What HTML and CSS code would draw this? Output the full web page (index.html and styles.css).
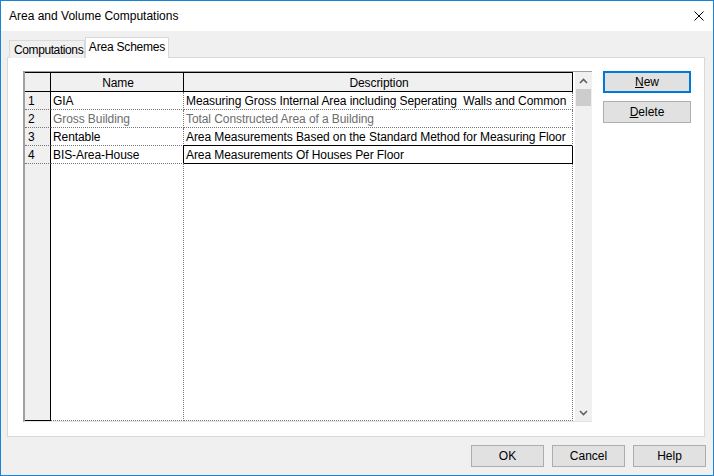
FILE: index.html
```html
<!DOCTYPE html>
<html>
<head>
<meta charset="utf-8">
<link rel="stylesheet" href="styles.css">
</head>
<body>
<div class="window">
  <div class="titlebar">
    <span class="title">Area and Volume Computations</span>
    <svg class="close" width="10" height="10" viewBox="0 0 10 10"><path d="M0.5 0.5 L9.5 9.5 M9.5 0.5 L0.5 9.5" stroke="#000" stroke-width="1" fill="none"/></svg>
  </div>
  <div class="client">
    <div class="tabs">
      <div class="tab">Computations</div>
      <div class="tab active">Area Schemes</div>
    </div>
    <div class="panel">
      <div class="gridbox">
        <div class="grid">
          <div class="row head">
            <div class="c rh"></div>
            <div class="c name">Name</div>
            <div class="c desc">Description</div>
          </div>
          <div class="row">
            <div class="c rh">1</div>
            <div class="c name">GIA</div>
            <div class="c desc">Measuring Gross Internal Area including Seperating&nbsp; Walls and Common</div>
          </div>
          <div class="row dim">
            <div class="c rh">2</div>
            <div class="c name">Gross Building</div>
            <div class="c desc">Total Constructed Area of a Building</div>
          </div>
          <div class="row">
            <div class="c rh">3</div>
            <div class="c name">Rentable</div>
            <div class="c desc">Area Measurements Based on the Standard Method for Measuring Floor</div>
          </div>
          <div class="row">
            <div class="c rh">4</div>
            <div class="c name">BIS-Area-House</div>
            <div class="c desc sel">Area Measurements Of Houses Per Floor</div>
          </div>
          <div class="row filler">
            <div class="c rh"></div>
            <div class="c name"></div>
            <div class="c desc"></div>
          </div>
        </div>
        <div class="vscroll">
          <div class="arrow"><svg width="9" height="6" viewBox="0 0 9 6"><path d="M1 5 L4.5 1.5 L8 5" stroke="#606060" stroke-width="1.6" fill="none"/></svg></div>
          <div class="thumb"></div>
          <div class="track"></div>
          <div class="arrow"><svg width="9" height="6" viewBox="0 0 9 6"><path d="M1 1 L4.5 4.5 L8 1" stroke="#606060" stroke-width="1.6" fill="none"/></svg></div>
        </div>
      </div>
      <div class="side">
        <button class="btn default"><u>N</u>ew</button>
        <button class="btn"><u>D</u>elete</button>
      </div>
    </div>
    <div class="footer">
      <button class="btn fbtn">OK</button>
      <button class="btn fbtn">Cancel</button>
      <button class="btn fbtn">Help</button>
    </div>
  </div>
</div>
</body>
</html>
```

FILE: styles.css
```css
* { box-sizing: border-box; }
html, body { margin: 0; padding: 0; background: #fff; }
body {
  font-family: "Liberation Sans", Arial, sans-serif;
  font-size: 12px;
  color: #000;
}
.window {
  width: 714px;
  height: 476px;
  border: 1px solid #1883d7;
  display: flex;
  flex-direction: column;
}
.titlebar {
  height: 30px;
  flex: none;
  background: #fff;
  display: flex;
  align-items: center;
  justify-content: space-between;
  padding: 0 9px 1px 8px;
}
.title { font-size: 12px; }
.close { display: block; }
.client {
  flex: 1;
  background: #f0f0f0;
  padding: 7px 8px 7px 6px;
  display: flex;
  flex-direction: column;
}
.tabs {
  height: 20px;
  display: flex;
  align-items: flex-end;
  padding-left: 2px;
  margin-bottom: -1px;
  position: relative;
  z-index: 1;
}
.tab {
  height: 18px;
  border: 1px solid #d9d9d9;
  border-bottom: none;
  background: #f0f0f0;
  padding: 0 0 0 4px;
  line-height: 18px;
  width: 76px;
  white-space: nowrap;
  overflow: hidden;
  letter-spacing: -0.4px;
}
.tab.active {
  height: 21px;
  width: 84px;
  background: #fff;
  padding: 0;
  line-height: 18px;
  text-align: center;
  letter-spacing: -0.2px;
}
.panel {
  height: 380px;
  border: 1px solid #d9d9d9;
  background: #fff;
  display: flex;
  align-items: flex-start;
  padding: 13px 0 0 15px;
}
.gridbox {
  width: 569px;
  height: 351px;
  border-top: 1px solid #a0a0a0;
  border-left: 2px solid #a0a0a0;
  border-bottom: 1px solid #e3e3e3;
  display: flex;
}
.grid {
  width: 550px;
  padding-right: 2px;
  display: flex;
  flex-direction: column;
}
.row {
  display: flex;
  height: 18px;
  flex: none;
}
.row.head {
  height: 20px;
  border-top: 1px solid #000;
  border-bottom: 1px solid #000;
}
.row.head .c {
  background: #f0f0f0;
  text-align: center;
  border-bottom: none;
  border-right: 1px solid #000;
  line-height: 20px;
}
.c {
  border-bottom: 1px dotted #777;
  border-right: 1px dotted #777;
  line-height: 19px;
  white-space: nowrap;
  overflow: hidden;
  padding-left: 2px;
  letter-spacing: -0.08px;
}
.c.rh {
  width: 26px;
  background: #f0f0f0;
  border-right: 1px solid #000;
  padding-left: 3px;
}
.c.name { width: 133px; }
.c.desc { width: 389px; }
.row.dim .c.name, .row.dim .c.desc { color: #6d6d6d; }
.c.sel {
  border-right: 1px solid #000;
  border-bottom: 1px solid #000;
  box-shadow: -1px -1px 0 #000;
  position: relative;
}
.row.filler { flex: 1; }
.row.filler .c.rh { border-bottom: 1px solid #000; }
.vscroll {
  width: 17px;
  background: #f0f0f0;
  display: flex;
  flex-direction: column;
}
.arrow {
  height: 17px;
  display: flex;
  align-items: center;
  justify-content: center;
}
.arrow svg { display: block; }
.thumb {
  height: 17px;
  margin: 0 1px;
  background: #cdcdcd;
}
.track { flex: 1; }
.side {
  margin-left: 11px;
  display: flex;
  flex-direction: column;
  gap: 8px;
}
.btn {
  font-family: "Liberation Sans", Arial, sans-serif;
  font-size: 12px;
  color: #000;
  background: #e1e1e1;
  border: 1px solid #adadad;
  width: 88px;
  height: 22px;
  padding: 0;
  margin: 0;
  line-height: 18px;
}
.btn.default { border: 2px solid #0078d7; }
.footer {
  margin-top: 8px;
  height: 22px;
  display: flex;
  justify-content: flex-end;
  gap: 8px;
  margin-right: -1px;
}
.fbtn { width: 73px; }
```
